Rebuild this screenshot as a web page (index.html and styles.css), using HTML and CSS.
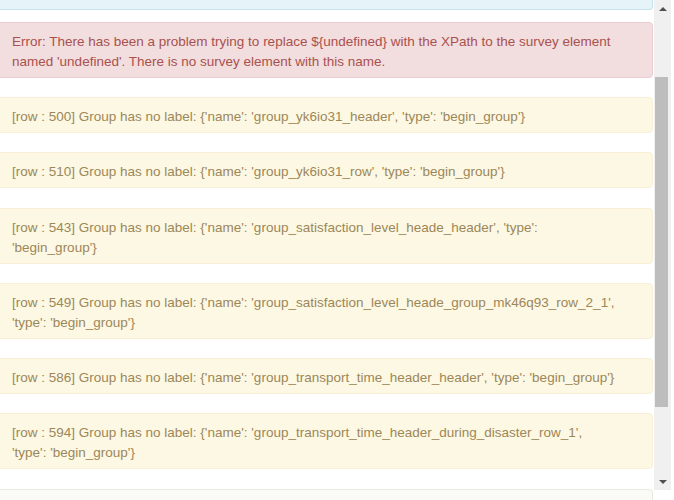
FILE: index.html
```html
<!DOCTYPE html>
<html lang="en">
<head>
	<meta charset="UTF-8">
	<title>Validation messages</title>
	<link rel="stylesheet" href="styles.css">
</head>
<body>
	<div class="frame">
		<div class="content">
			<div class="alert alert-info"></div>
			<div class="alert alert-danger">Error: There has been a problem trying to replace ${undefined} with the XPath to the survey element named 'undefined'. There is no survey element with this name.</div>
			<div class="list">
				<div class="alert alert-warning">[row : 500] Group has no label: {'name': 'group_yk6io31_header', 'type': 'begin_group'}</div>
				<div class="alert alert-warning">[row : 510] Group has no label: {'name': 'group_yk6io31_row', 'type': 'begin_group'}</div>
				<div class="alert alert-warning">[row : 543] Group has no label: {'name': 'group_satisfaction_level_heade_header', 'type': 'begin_group'}</div>
				<div class="alert alert-warning">[row : 549] Group has no label: {'name': 'group_satisfaction_level_heade_group_mk46q93_row_2_1', 'type': 'begin_group'}</div>
				<div class="alert alert-warning">[row : 586] Group has no label: {'name': 'group_transport_time_header_header', 'type': 'begin_group'}</div>
				<div class="alert alert-warning">[row : 594] Group has no label: {'name': 'group_transport_time_header_during_disaster_row_1', 'type': 'begin_group'}</div>
				<div class="alert alert-last"></div>
			</div>
		</div>
		<div class="scrollbar">
			<div class="arrow arrow-up"></div>
			<div class="track">
				<div class="thumb"></div>
			</div>
			<div class="arrow arrow-down"></div>
		</div>
	</div>
</body>
</html>
```

FILE: styles.css
```css
html, body{
	margin: 0;
	padding: 0;
	background: #fff;
	overflow: hidden;
}
body{
	font-family: "Liberation Sans", Arial, sans-serif;
	font-size: 13.5px;
	line-height: 20px;
}
.frame{
	display: flex;
	width: 674px;
	height: 500px;
}
.content{
	width: 653px;
	height: 500px;
	overflow: hidden;
}
.alert{
	margin-left: -4px;
	padding: 9px 35px 5px 15px;
	border: 1px solid transparent;
	border-radius: 4px;
}
.alert-info{
	padding: 0;
	margin-top: -10px;
	height: 19px;
	background: #e6f3f9;
	border-color: #c3e4f0;
	border-top: 0;
	margin-bottom: 12px;
}
.alert-danger{
	background: #f2dede;
	border-color: #ebccd1;
	color: #a9514f;
	margin-bottom: 19px;
}
.list{
	display: flex;
	flex-direction: column;
	gap: 19.3px;
}
.alert-warning{
	background: #fcf8e3;
	border-color: #f8efd6;
	color: #9c8759;
}
.alert-last{
	height: 40px;
	padding: 0;
	background: #fafaf7;
	border-color: #ebe8df;
}
.scrollbar{
	width: 17px;
	height: 490px;
	margin-left: 1px;
	background: #f0f0f0;
	display: flex;
	flex-direction: column;
}
.arrow{
	height: 17px;
	display: flex;
	align-items: center;
	justify-content: center;
}
.arrow::before{
	content: "";
	border-left: 4px solid transparent;
	border-right: 4px solid transparent;
}
.arrow-up::before{
	border-bottom: 4px solid #505050;
}
.arrow-down::before{
	border-top: 4px solid #505050;
}
.track{
	flex: 1;
	padding-top: 60px;
}
.thumb{
	width: 13px;
	height: 330px;
	margin-left: 1px;
	background: #bdbdbd;
}
```
